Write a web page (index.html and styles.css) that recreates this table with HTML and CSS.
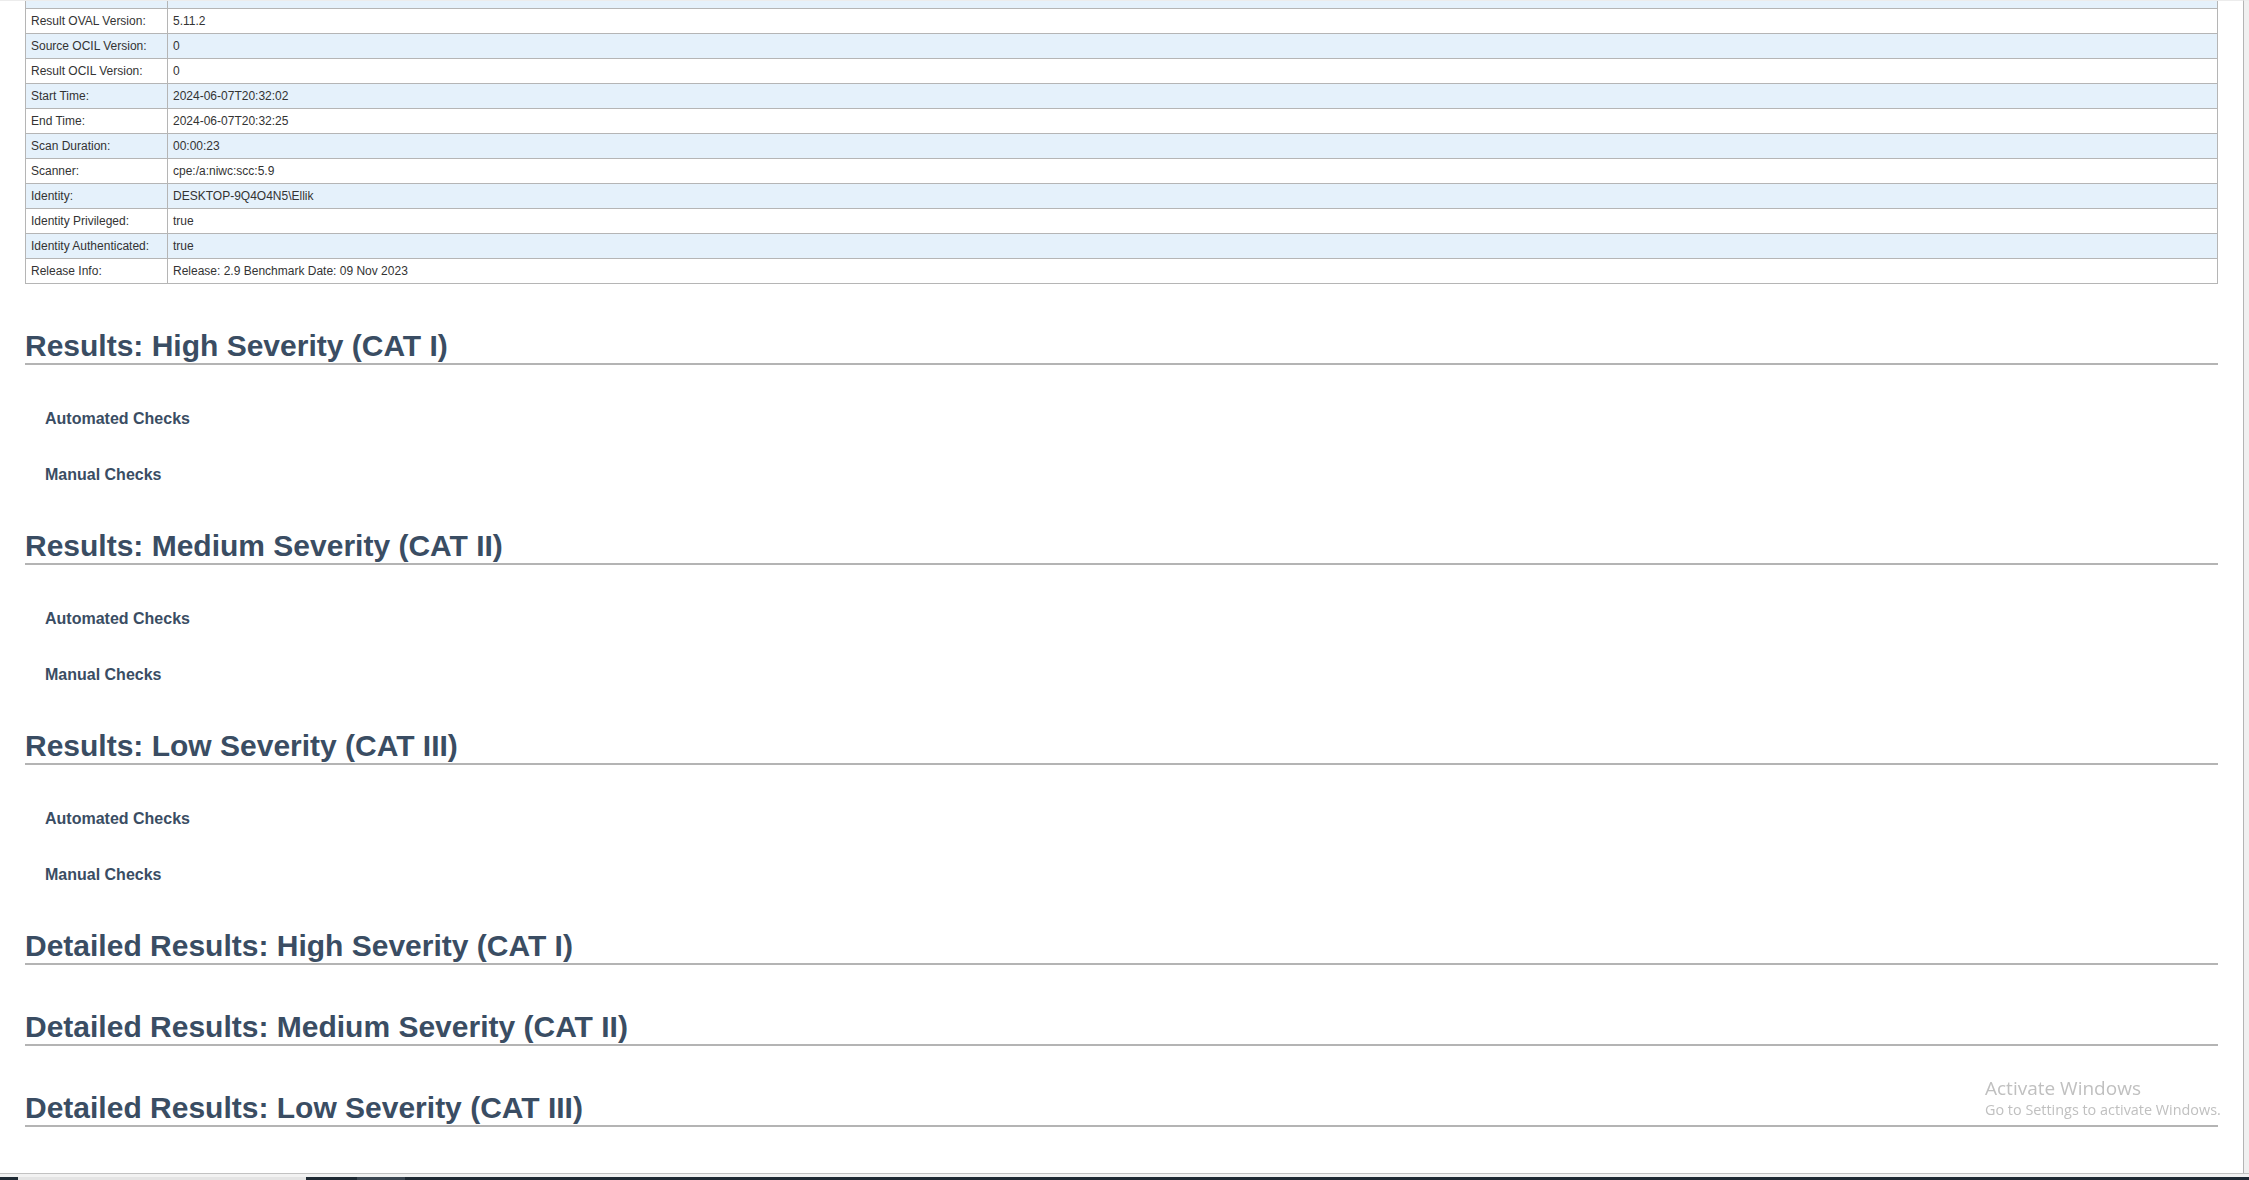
FILE: index.html
```html
<!DOCTYPE html>
<html lang="en">
<head>
<meta charset="utf-8">
<title>SCC Results</title>
<link rel="stylesheet" href="styles.css">
</head>
<body>
<div class="window">
  <main class="page">
    <table class="info">
      <tbody>
        <tr class="cut"><td class="k"></td><td></td></tr>
        <tr><td class="k">Result OVAL Version:</td><td>5.11.2</td></tr>
        <tr><td class="k">Source OCIL Version:</td><td>0</td></tr>
        <tr><td class="k">Result OCIL Version:</td><td>0</td></tr>
        <tr><td class="k">Start Time:</td><td>2024-06-07T20:32:02</td></tr>
        <tr><td class="k">End Time:</td><td>2024-06-07T20:32:25</td></tr>
        <tr><td class="k">Scan Duration:</td><td>00:00:23</td></tr>
        <tr><td class="k">Scanner:</td><td>cpe:/a:niwc:scc:5.9</td></tr>
        <tr><td class="k">Identity:</td><td>DESKTOP-9Q4O4N5\Ellik</td></tr>
        <tr><td class="k">Identity Privileged:</td><td>true</td></tr>
        <tr><td class="k">Identity Authenticated:</td><td>true</td></tr>
        <tr><td class="k">Release Info:</td><td>Release: 2.9 Benchmark Date: 09 Nov 2023</td></tr>
      </tbody>
    </table>

    <section>
      <h2 class="sev">Results: High Severity (CAT I)</h2>
      <div class="checks">
        <h3>Automated Checks</h3>
        <h3>Manual Checks</h3>
      </div>
    </section>

    <section>
      <h2 class="sev">Results: Medium Severity (CAT II)</h2>
      <div class="checks">
        <h3>Automated Checks</h3>
        <h3>Manual Checks</h3>
      </div>
    </section>

    <section>
      <h2 class="sev">Results: Low Severity (CAT III)</h2>
      <div class="checks">
        <h3>Automated Checks</h3>
        <h3>Manual Checks</h3>
      </div>
    </section>

    <section><h2 class="sev">Detailed Results: High Severity (CAT I)</h2></section>
    <section><h2 class="sev">Detailed Results: Medium Severity (CAT II)</h2></section>
    <section><h2 class="sev">Detailed Results: Low Severity (CAT III)</h2></section>
  </main>
  <div class="edge"></div>
</div>
<div class="statusbar">
  <div class="status-light"></div>
  <div class="taskbar">
    <span class="seg seg-a"></span>
    <span class="seg seg-b"></span>
    <span class="seg seg-c"></span>
    <span class="seg seg-d"></span>
  </div>
</div>
<div class="watermark">
  <div class="wm-title">Activate Windows</div>
  <div class="wm-sub">Go to Settings to activate Windows.</div>
</div>
</body>
</html>
```

FILE: styles.css
```css
html, body {
  margin: 0;
  height: 100%;
}

body {
  display: flex;
  flex-direction: column;
  background: #ffffff;
  color: #333333;
  font-family: "Liberation Sans", Arial, sans-serif;
  overflow: hidden;
}

.window {
  flex: 1;
  display: flex;
  min-height: 0;
}

.page {
  flex: 1;
  min-width: 0;
  padding: 0 25px;
  border-top: 1px solid #ececec;
  overflow: hidden;
}

.edge {
  width: 6px;
  box-sizing: border-box;
  border-left: 1px solid #b4b4b4;
  border-top: 1px solid #ececec;
  background: #f0f0f0;
}

/* info table */
.info {
  width: 100%;
  table-layout: fixed;
  border-collapse: separate;
  border-spacing: 0;
  border-left: 1px solid #b5b5b5;
  font-size: 12px;
}

.info td {
  padding: 5px 5px;
  line-height: 14px;
  border-right: 1px solid #b5b5b5;
  border-bottom: 1px solid #b5b5b5;
  white-space: nowrap;
  overflow: hidden;
  color: #333333;
}

.info td.k {
  width: 142px;
  box-sizing: border-box;
}

.info tr:nth-child(odd) td {
  background: #e5f1fb;
}

.info tr.cut td {
  height: 7px;
  padding: 0;
  line-height: 0;
}

/* section headings */
.sev {
  margin: 44px 0 0;
  font-size: 30px;
  line-height: 35px;
  font-weight: bold;
  color: #3a4d63;
  border-bottom: 2px solid #b4b4b4;
}

.sev + .checks,
.checks {
  display: flex;
  flex-direction: column;
  gap: 37px;
  padding: 44px 0 0 20px;
}

.checks h3 {
  margin: 0;
  font-size: 16px;
  line-height: 19px;
  font-weight: bold;
  color: #3a4d63;
}

/* bottom frame */
.statusbar {
  height: 7px;
  border-top: 1px solid #c2c2c2;
  box-sizing: border-box;
  display: flex;
  flex-direction: column;
}

.status-light {
  height: 3px;
  background: #f2f2f2;
}

.taskbar {
  flex: 1;
  display: flex;
  background: #1f2a34;
}

.seg {
  display: block;
  height: 100%;
}

.seg-a { width: 18px; }
.seg-b { width: 288px; background: #e4e4e4; }
.seg-c { width: 51px; }
.seg-d { width: 48px; background: #3b4651; }

/* OS watermark overlay */
.watermark {
  position: fixed;
  left: 1985px;
  top: 1077px;
  font-family: "Open Sans", "Noto Sans", sans-serif;
  color: #c0c0c0;
  pointer-events: none;
}

.wm-title {
  font-size: 19px;
  line-height: 23px;
}

.wm-sub {
  font-size: 14.4px;
  line-height: 20px;
}
```
